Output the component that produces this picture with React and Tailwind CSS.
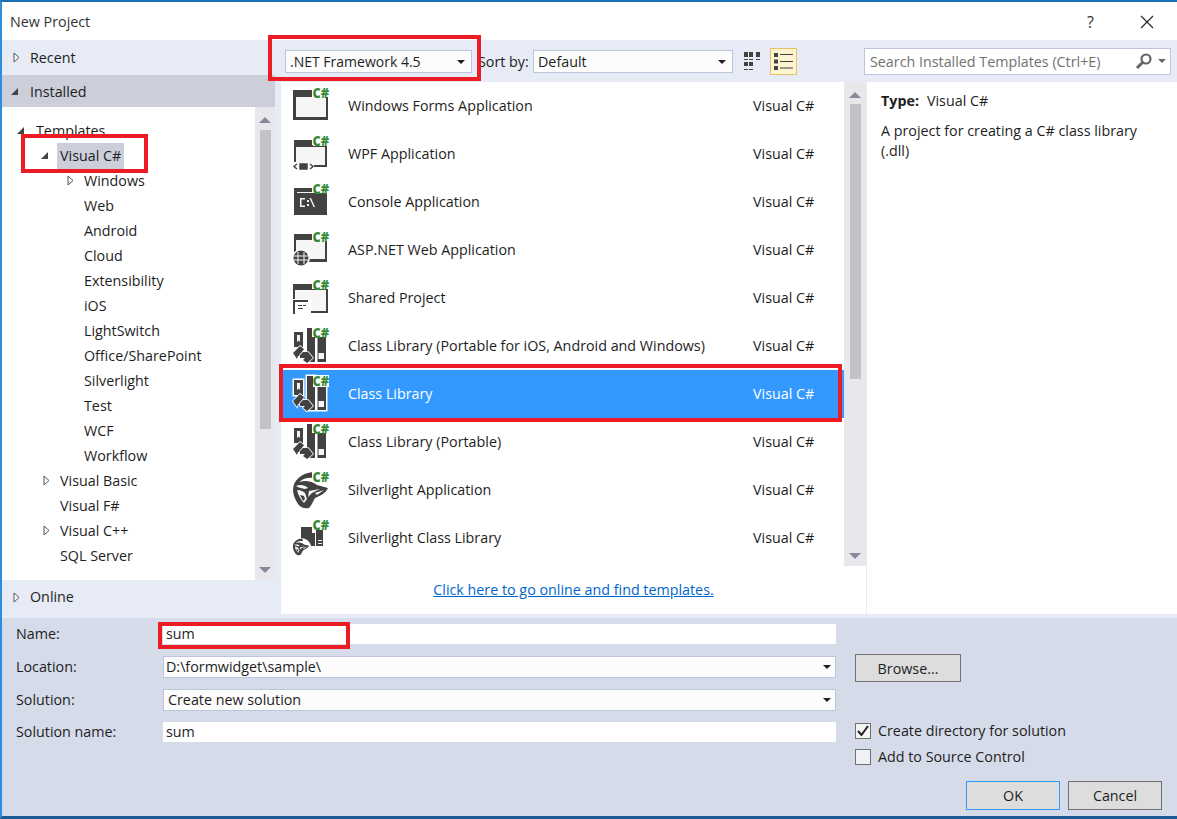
import React from "react";

const font = "[font-family:'Open_Sans',sans-serif]";

const tree = [
  { name: "Templates", indent: 36, arrow: "open" },
  { name: "Visual C#", indent: 60, arrow: "open", selected: true },
  { name: "Windows", indent: 84, arrow: "closed" },
  { name: "Web", indent: 84 },
  { name: "Android", indent: 84 },
  { name: "Cloud", indent: 84 },
  { name: "Extensibility", indent: 84 },
  { name: "iOS", indent: 84 },
  { name: "LightSwitch", indent: 84 },
  { name: "Office/SharePoint", indent: 84 },
  { name: "Silverlight", indent: 84 },
  { name: "Test", indent: 84 },
  { name: "WCF", indent: 84 },
  { name: "Workflow", indent: 84 },
  { name: "Visual Basic", indent: 60, arrow: "closed" },
  { name: "Visual F#", indent: 60 },
  { name: "Visual C++", indent: 60, arrow: "closed" },
  { name: "SQL Server", indent: 60 },
];

const templates = [
  { name: "Windows Forms Application", icon: "forms" },
  { name: "WPF Application", icon: "wpf" },
  { name: "Console Application", icon: "console" },
  { name: "ASP.NET Web Application", icon: "asp" },
  { name: "Shared Project", icon: "shared" },
  { name: "Class Library (Portable for iOS, Android and Windows)", icon: "library" },
  { name: "Class Library", icon: "library", selected: true },
  { name: "Class Library (Portable)", icon: "library" },
  { name: "Silverlight Application", icon: "silverlight" },
  { name: "Silverlight Class Library", icon: "silverlib" },
];

function ArrowOpen() {
  return (
    <svg width="9" height="9" viewBox="0 0 9 9">
      <path d="M8 1v7H1z" fill="#444" />
    </svg>
  );
}

function ArrowClosed() {
  return (
    <svg width="7" height="11" viewBox="0 0 7 11">
      <path d="M1 1l5 4.500L1 10z" fill="#fff" stroke="#555" />
    </svg>
  );
}

function Caret({ color = "#1e1e1e" }) {
  return (
    <svg width="8" height="4" viewBox="0 0 8 4">
      <path d="M0 0h8L4 4z" fill={color} />
    </svg>
  );
}

function Helmet({ light = "#f6f6f6" }) {
  return (
    <>
      <path d="M2 19C2 9 11 2 22 1l2 6c-6-1-12 0-16 4 6-2 13-1 18 3l11 3c-2 5-8 8-13 10-2 3-3 7-6 10-4 1-8 0-11-4C4 28 2 24 2 19z" fill="#424242" />
      <path d="M5 15c4-2 9-1 12 2l-3 1c-3-1-6-1-9-3z" fill={light} />
      <path d="M6 19c3 0 6 1 8 3l2 6-3 4c-3-3-6-8-7-13z" fill={light} />
      <path d="M9 24l4 1 1 3-2 2z" fill="#424242" />
      <path d="M18 20l11-2-8 4-4 4z" fill={light} />
      <path d="M24 22l9-3-7 5z" fill={light} />
    </>
  );
}

function Icon({ type, selected }) {
  const d = "#424242";
  return (
    <svg width="38" height="38" viewBox="0 0 38 38" className="shrink-0 overflow-visible">
      {type === "forms" && (
        <>
          <path d="M2 3h19v7h16v23H2z" fill={d} />
          <path d="M5 10h30v20H5z" fill="#f6f6f6" />
        </>
      )}
      {type === "wpf" && (
        <>
          <path d="M3 5h19v6h14v21H19v-3H5v-2H3z" fill={d} />
          <path d="M5 12h29v18H5z" fill="#f6f6f6" />
          <path d="M2 28h21v7H2z" fill="#fff" />
          <path d="M9 29h7v5H9zM6 29l-3 2.500 3 2.500M19 29l3 2.500-3 2.500" fill="none" stroke={d} strokeWidth="1.500" />
          <path d="M9 29h7v5H9z" fill={d} />
        </>
      )}
      {type === "console" && (
        <>
          <path d="M3 5h19v5h14v22H3z" fill={d} />
          <path d="M6 9h15v1H6z" fill="#f6f6f6" />
          <path d="M9 15h5v1.500h-3.500v6H14V24H9zM16 17h2v2h-2zM16 21h2v2h-2zM20 15l4 9h-1.500l-4-9z" fill="#f6f6f6" />
        </>
      )}
      {type === "asp" && (
        <>
          <path d="M3 3h20v6h13v22H3z" fill={d} />
          <path d="M5 9h29v19H5z" fill="#f6f6f6" />
          <circle cx="10" cy="27" r="9" fill="#fff" />
          <circle cx="10" cy="27" r="7.500" fill={d} />
          <path d="M3 25h14M3 29h14M7 21v12M13 21v12" stroke="#f6f6f6" />
        </>
      )}
      {type === "shared" && (
        <>
          <path d="M2 5h19v5h16v24H2z" fill={d} />
          <path d="M4 11h31v21H4z" fill="#f6f6f6" />
          <path d="M2 20h18v15H2z" fill="#fff" />
          <path d="M2 21h15v2H2zM2 23h2v12H2zM7 26h4v1H7zM12 26h3v1h-3zM7 29h5v1H7z" fill={d} />
        </>
      )}
      {type === "library" && (
        <>
          <g stroke={selected ? "#fff" : "none"} strokeWidth={selected ? 3 : 0} style={{ paintOrder: "stroke" }}>
            <path d="M3 5h9v15H3z" fill={d} />
            <path d="M16 1h8v34h-8zM26.500 10H35v25h-8.500z" fill={d} />
          </g>
          <path d="M6 8h3v7l-1.500-1.500L6 15zM27.500 26H33v6h-5.500z" fill="#f6f6f6" />
          <g stroke="#fff" strokeWidth="1.500" style={{ paintOrder: "stroke" }}>
            <path d="M2 26l7-7 4 3-2 3h4v4H7l-1 3z" fill={d} />
            <path d="M12 25h5l5 6-6 5-4-3 2-2h-5v-3z" fill={d} />
          </g>
        </>
      )}
      {type === "silverlight" && <Helmet />}
      {type === "silverlib" && (
        <>
          <path d="M10 8h11v19H10zM21 14h3v13h-3zM25 11h7v16h-7z" fill={d} />
          <path d="M27 21h4v1h-4zM27 24h4v1h-4z" fill="#f6f6f6" />
          <ellipse cx="10" cy="28" rx="10" ry="9" fill="#fff" />
          <g transform="translate(1 19) scale(0.46)">
            <Helmet />
          </g>
        </>
      )}
      {selected && <path d="M22 0h16v12H22z" fill="#fff" />}
      {!selected && <path d="M21 0h17v10H21z" fill="#fff" />}
      <text x="21.500" y="11" fontSize="14" fontWeight="800" fontFamily="Open Sans" fill="#388a34" textLength="16.500" lengthAdjust="spacingAndGlyphs">C#</text>
    </svg>
  );
}

function Field({ value, select, height, pad }) {
  return (
    <div className={`w-[673px] flex items-center justify-between text-[#1e1e1e] ${height} ${pad} ${select ? "bg-[#fcfcfc] border border-[#bcc5dc] pr-[4px]" : "bg-white"}`}>
      <span>{value}</span>
      {select && <Caret />}
    </div>
  );
}

function Button({ label, width, blue }) {
  return (
    <div className={`h-[28px] pt-[1px] flex items-center justify-center bg-[#dddddd] border text-[#1e1e1e] ${width} ${blue ? "border-[#3399ff]" : "border-[#707070]"}`}>
      {label}
    </div>
  );
}

function Scrollbar({ thumb, className }) {
  return (
    <div className={`relative bg-[#e8e8ec] flex flex-col items-center ${className}`}>
      <svg width="12" height="6" viewBox="0 0 12 6" className="mt-[10px] shrink-0">
        <path d="M0 6h12L6 0z" fill="#868999" />
      </svg>
      <div className={`w-[11px] bg-[#c2c3c9] ${thumb}`} />
      <svg width="12" height="6" viewBox="0 0 12 6" className="mt-auto mb-[7px] shrink-0">
        <path d="M0 0h12L6 6z" fill="#868999" />
      </svg>
    </div>
  );
}

function RedBox({ className }) {
  return <div className={`absolute border-4 border-[#ed1c24] ${className}`} />;
}

export default function App() {
  return (
    <div className={`relative w-[1177px] h-[819px] overflow-hidden bg-white flex flex-col border-t-2 border-t-[#1b6fb5] border-l-2 border-l-[#2b8fe0] border-b-[3px] border-b-[#1b5c96] text-[14.300px] text-[#1e1e1e] ${font}`}>
      <div className="h-[38px] shrink-0 flex items-center pl-[8px] pt-[2px] text-[#333]">
        <span>New Project</span>
        <span className="ml-auto mr-[46px] text-[16px]">?</span>
        <svg width="14" height="14" viewBox="0 0 14 14" className="mr-[23px]">
          <path d="M1 1l12 12M13 1L1 13" stroke="#222" strokeWidth="1.100" />
        </svg>
      </div>

      <div className="flex h-[574px] shrink-0 bg-[#e6ebf5]">
        {/* left nav */}
        <div className="w-[273px] shrink-0 flex flex-col">
          <div className="h-[35px] shrink-0 flex items-center pl-[11px] gap-[10px]">
            <ArrowClosed />
            <span>Recent</span>
          </div>
          <div className="h-[32px] shrink-0 flex items-center pl-[8px] pt-[1px] gap-[11px] bg-[#ccced9]">
            <ArrowOpen />
            <span>Installed</span>
          </div>
          <div className="flex-1 flex min-h-0">
            <div className="flex-1 bg-white pt-[11px]">
              {tree.map((t) => (
                <div key={t.name} className="h-[25px] relative flex items-center" style={{ paddingLeft: t.indent - 2 }}>
                  {t.arrow && (
                    <span className="absolute flex items-center" style={{ left: t.indent - (t.arrow === "open" ? 22 : 19) }}>
                      {t.arrow === "open" ? <ArrowOpen /> : <ArrowClosed />}
                    </span>
                  )}
                  <span className={t.selected ? "bg-[#ccced9] -mx-[3px] px-[3px] h-[26px] flex items-center" : ""}>{t.name}</span>
                </div>
              ))}
            </div>
            <Scrollbar thumb="h-[299px] mt-[7px]" className="w-[20px]" />
          </div>
          <div className="h-[34px] shrink-0 flex items-center pl-[11px] gap-[10px]">
            <ArrowClosed />
            <span>Online</span>
          </div>
        </div>

        {/* templates */}
        <div className="flex-1 flex flex-col min-w-0">
          <div className="h-[42px] shrink-0 flex items-center relative">
            <div className="ml-[10px] w-[187px] h-[23px] pt-[1px] bg-[#fcfcfc] border border-[#bcc5dc] flex items-center justify-between pl-[4px] pr-[6px]">
              <span className="text-[14px]">.NET Framework 4.5</span>
              <Caret />
            </div>
            <span className="ml-[6px] w-[55px] pt-[1px]">Sort by:</span>
            <div className="w-[200px] h-[23px] pt-[1px] bg-[#fcfcfc] border border-[#bcc5dc] flex items-center justify-between pl-[4px] pr-[6px]">
              <span>Default</span>
              <Caret />
            </div>
            <svg width="16" height="18" viewBox="0 0 16 18" className="ml-[11px]">
              <path d="M0 0h4v5H0zM5 0h4v5H5zM12 0h4v5h-4zM0 7h4v1H0zM5 7h4v1H5zM12 7h4v1h-4zM0 10h4v4H0zM5 10h4v4H5zM0 17h4v1H0zM5 17h4v1H5z" fill="#424242" />
            </svg>
            <div className="ml-[10px] w-[27px] h-[27px] bg-[#fef4cf] border border-[#e5c365] flex items-center justify-center">
              <svg width="19" height="17" viewBox="0 0 19 17">
                <path d="M0 0h4v4H0zM0 6.500h4v4H0zM0 13h4v4H0z" fill="#424242" />
                <path d="M6 1.500h13M6 8.500h13M6 15h13" stroke="#424242" />
              </svg>
            </div>
            <div className="ml-[67px] w-[307px] h-[27px] bg-white border border-[#bcc5dc] flex items-center pl-[5px] pr-[4px] text-[#717171]">
              <span className="pt-[2px]">Search Installed Templates (Ctrl+E)</span>
              <svg width="18" height="18" viewBox="0 0 18 18" className="ml-auto mr-[5px]">
                <circle cx="11" cy="7" r="4.500" fill="none" stroke="#666" strokeWidth="2.200" />
                <path d="M8 10l-6 6" stroke="#666" strokeWidth="3" />
              </svg>
              <Caret color="#666" />
            </div>
          </div>

          <div className="flex-1 flex min-h-0">
            <div className="w-[585px] shrink-0 ml-[6px] flex flex-col">
              <div className="flex flex-1 min-h-0">
                <div className="w-[563px] bg-white">
                  {templates.map((t) => (
                    <div key={t.name} className={`h-[48px] flex items-center pl-[10px] ${t.selected ? "bg-[#3399ff] text-white" : ""}`}>
                      <Icon type={t.icon} selected={t.selected} />
                      <span className="ml-[19px] w-[405px] whitespace-nowrap">{t.name}</span>
                      <span className="whitespace-nowrap">Visual C#</span>
                    </div>
                  ))}
                </div>
                <Scrollbar thumb="h-[275px] mt-[6px]" className="w-[22px]" />
              </div>
              <div className="h-[48px] shrink-0 bg-white flex items-center justify-center">
                <span className="text-[#0066cc] underline">Click here to go online and find templates.</span>
              </div>
            </div>
            <div className="flex-1 bg-white border-l border-[#e6ebf5] pl-[14px] pt-[8px]">
              <div>
                <span className="font-bold mr-[8px]">Type:</span>
                <span>Visual C#</span>
              </div>
              <div className="mt-[10px] leading-[20px]">
                A project for creating a C# class library
                <br />
                (.dll)
              </div>
            </div>
          </div>
        </div>
      </div>

      {/* bottom form */}
      <div className="flex-1 border-t-4 border-t-[#e6ebf5] bg-[#d6dbe9] flex pl-[14px] pt-[6px] leading-[20px]">
        <div className="flex flex-col">
          <div className="flex items-center mb-[12px]">
            <span className="w-[147px]">Name:</span>
            <Field value="sum" height="h-[20px]" pad="pl-[3px]" />
          </div>
          <div className="flex items-center mb-[11px]">
            <span className="w-[147px]">Location:</span>
            <Field value="D:\formwidget\sample\" select height="h-[22px]" pad="pl-[2px]" />
          </div>
          <div className="flex items-center mb-[11px]">
            <span className="w-[147px]">Solution:</span>
            <Field value="Create new solution" select height="h-[22px]" pad="pl-[4px]" />
          </div>
          <div className="flex items-center">
            <span className="w-[147px]">Solution name:</span>
            <Field value="sum" height="h-[20px]" pad="pl-[3px]" />
          </div>
        </div>
        <div className="ml-[19px] flex flex-col flex-1 pt-[30px]">
          <Button label="Browse..." width="w-[106px]" />
          <div className="mt-[41px] flex items-center gap-[7px] h-[16px]">
            <div className="w-[16px] h-[16px] bg-[#f5f5f5] border border-[#707070] flex items-center justify-center">
              <svg width="12" height="12" viewBox="0 0 12 12">
                <path d="M1 6l3.500 4L11 1" fill="none" stroke="#222" strokeWidth="2" />
              </svg>
            </div>
            <span>Create directory for solution</span>
          </div>
          <div className="mt-[10px] flex items-center gap-[7px] h-[16px]">
            <div className="w-[16px] h-[16px] bg-[#f0f1f5] border border-[#707070]" />
            <span>Add to Source Control</span>
          </div>
          <div className="mt-[16px] flex gap-[8px] ml-[111px]">
            <Button label="OK" width="w-[94px] !h-[29px]" blue />
            <Button label="Cancel" width="w-[94px] !h-[29px]" />
          </div>
        </div>
      </div>

      <RedBox className="left-[266px] top-[33px] w-[213px] h-[46px]" />
      <RedBox className="left-[19px] top-[132px] w-[127px] h-[39px]" />
      <RedBox className="left-[277px] top-[362px] w-[563px] h-[58px]" />
      <RedBox className="left-[156px] top-[620px] w-[192px] h-[27px]" />
    </div>
  );
}
